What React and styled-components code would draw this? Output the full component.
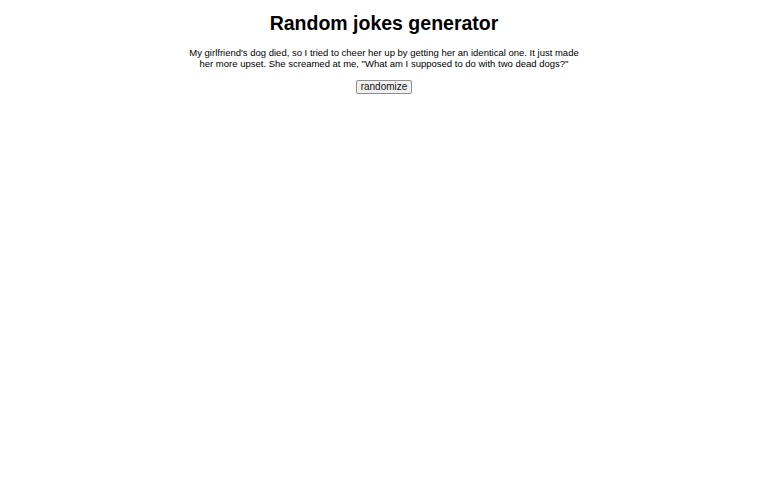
import React, { useState } from 'react';
import styled, { createGlobalStyle } from 'styled-components';

const jokes = [
  'My girlfriend\'s dog died, so I tried to cheer her up by getting her an identical one. It just made her more upset. She screamed at me, "What am I supposed to do with two dead dogs?"',
  'I told my wife she was drawing her eyebrows too high. She looked surprised.',
  'Why don\'t skeletons fight each other? They don\'t have the guts.',
];

const GlobalStyle = createGlobalStyle`
  body {
    margin: 0;
    background: #fff;
    font-family: "Liberation Sans", Arial, sans-serif;
    color: #000;
  }
`;

const Page = styled.div`
  display: flex;
  flex-direction: column;
  align-items: center;
  padding-top: 12px;
`;

const Title = styled.h1`
  margin: 0;
  font-size: 19.5px;
  font-weight: bold;
  line-height: 23px;
`;

const Joke = styled.p`
  margin: 12px 0 0;
  max-width: 400px;
  font-size: 9.5px;
  line-height: 11px;
  text-align: center;
`;

const Button = styled.button`
  margin-top: 11px;
  padding: 0 4px;
  font-family: "Liberation Sans", Arial, sans-serif;
  font-size: 10px;
  line-height: 12px;
  color: #111;
  background: #f0f0f0;
  border: 1px solid #8f8f8f;
  border-radius: 2px;
  cursor: pointer;
`;

export default function App() {
  const [index, setIndex] = useState(0);

  const randomize = () => {
    setIndex(Math.floor(Math.random() * jokes.length));
  };

  return (
    <>
      <GlobalStyle />
      <Page>
        <Title>Random jokes generator</Title>
        <Joke>{jokes[index]}</Joke>
        <Button onClick={randomize}>randomize</Button>
      </Page>
    </>
  );
}
